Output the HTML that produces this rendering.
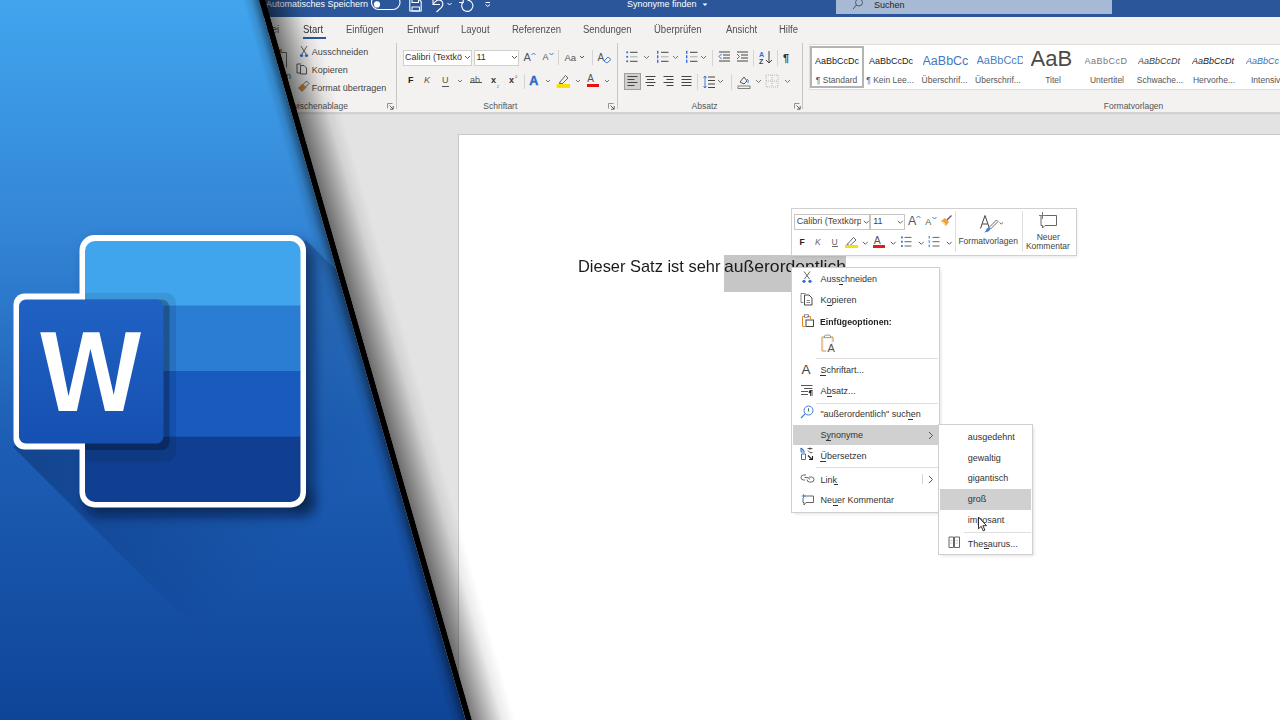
<!DOCTYPE html><html><head><meta charset="utf-8"><style>
html,body{margin:0;padding:0;width:1280px;height:720px;overflow:hidden;background:#e3e3e3}
body{position:relative;font-family:"Liberation Sans",sans-serif}
.t{position:absolute;line-height:1;white-space:nowrap;font-family:"Liberation Sans",sans-serif}
.r{position:absolute}
.s{position:absolute;overflow:visible}
</style></head><body>
<div class="r" style="left:0px;top:0px;width:1280px;height:17px;background:#2b579a;"></div>
<div class="t" style="left:266.00px;top:0.18px;font-size:9px;color:#ffffff;font-weight:400;">Automatisches Speichern</div>
<svg class="s" style="left:370px;top:-6px;" width="32" height="17" viewBox="0 0 32 17"><rect x="1.5" y="1.5" width="28.5" height="14" rx="7" fill="none" stroke="#fff" stroke-width="1.1"/><circle cx="7" cy="10.4" r="3.1" fill="#fff"/></svg>
<svg class="s" style="left:408px;top:-2px;" width="16" height="15" viewBox="0 0 16 15"><path d="M1.8 1 V13 H13.2 V3.5 L10.7 1 Z" fill="none" stroke="#fff" stroke-width="1.1"/><rect x="4" y="9" width="7.5" height="4" fill="none" stroke="#fff" stroke-width="1"/><rect x="4" y="1" width="6.5" height="3.5" fill="none" stroke="#fff" stroke-width="1"/></svg>
<svg class="s" style="left:430px;top:-2px;" width="24" height="16" viewBox="0 0 24 16"><path d="M3 2 V6.5 H10" fill="none" stroke="#fff" stroke-width="1.1"/><path d="M3.5 6 Q7 0.5 11 2.5 Q14.5 5 11.5 9.5 L6.5 14" fill="none" stroke="#fff" stroke-width="1.1"/><path d="M17.5 5 L19.5 7 L21.5 5" fill="none" stroke="#fff" stroke-width="1"/></svg>
<svg class="s" style="left:458px;top:-2px;" width="16" height="16" viewBox="0 0 16 16"><path d="M5 4.2 A5.6 5.6 0 1 0 9.5 2.2" fill="none" stroke="#fff" stroke-width="1.1"/><path d="M5.2 0 V4.5 H1" fill="none" stroke="#fff" stroke-width="1.1"/></svg>
<svg class="s" style="left:484px;top:0px;" width="8" height="10" viewBox="0 0 8 10"><path d="M1.5 2.5 H6 M1.5 4.5 L3.75 6.5 L6 4.5" fill="none" stroke="#fff" stroke-width="1"/></svg>
<div class="t" style="left:627.00px;top:-0.02px;font-size:9px;color:#ffffff;font-weight:400;">Synonyme finden</div>
<svg class="s" style="left:701px;top:2px;" width="8" height="6" viewBox="0 0 8 6"><path d="M1.5 1.5 L4 4 L6.5 1.5 Z" fill="#fff"/></svg>
<div class="r" style="left:836px;top:0px;width:276px;height:14px;background:#a6b9d5;"></div>
<svg class="s" style="left:851px;top:-2px;" width="14" height="14" viewBox="0 0 14 14"><circle cx="8" cy="4.5" r="3.5" fill="none" stroke="#444" stroke-width="0.8"/><path d="M5.5 7 L2 11" stroke="#444" stroke-width="0.9"/></svg>
<div class="t" style="left:874.00px;top:0.68px;font-size:9px;color:#262626;font-weight:400;">Suchen</div>
<div class="r" style="left:0px;top:17px;width:1280px;height:95px;background:#f3f2f1;"></div>
<div class="t" style="left:257.00px;top:24.74px;font-size:10px;color:#505050;font-weight:400;transform:scaleX(0.95);transform-origin:0 0;">Datei</div>
<div class="t" style="left:303.00px;top:24.74px;font-size:10px;color:#323130;font-weight:400;transform:scaleX(0.95);transform-origin:0 0;">Start</div>
<div class="t" style="left:346.00px;top:24.74px;font-size:10px;color:#505050;font-weight:400;transform:scaleX(0.95);transform-origin:0 0;">Einfügen</div>
<div class="t" style="left:406.60px;top:24.74px;font-size:10px;color:#505050;font-weight:400;transform:scaleX(0.95);transform-origin:0 0;">Entwurf</div>
<div class="t" style="left:461.00px;top:24.74px;font-size:10px;color:#505050;font-weight:400;transform:scaleX(0.95);transform-origin:0 0;">Layout</div>
<div class="t" style="left:512.00px;top:24.74px;font-size:10px;color:#505050;font-weight:400;transform:scaleX(0.95);transform-origin:0 0;">Referenzen</div>
<div class="t" style="left:583.00px;top:24.74px;font-size:10px;color:#505050;font-weight:400;transform:scaleX(0.95);transform-origin:0 0;">Sendungen</div>
<div class="t" style="left:654.00px;top:24.74px;font-size:10px;color:#505050;font-weight:400;transform:scaleX(0.95);transform-origin:0 0;">Überprüfen</div>
<div class="t" style="left:726.30px;top:24.74px;font-size:10px;color:#505050;font-weight:400;transform:scaleX(0.95);transform-origin:0 0;">Ansicht</div>
<div class="t" style="left:779.00px;top:24.74px;font-size:10px;color:#505050;font-weight:400;transform:scaleX(0.95);transform-origin:0 0;">Hilfe</div>
<div class="r" style="left:303px;top:36.5px;width:22.5px;height:2px;background:#2b579a;"></div>
<div class="r" style="left:396px;top:43px;width:1px;height:66px;background:#c8c6c4;"></div>
<div class="r" style="left:617px;top:43px;width:1px;height:66px;background:#c8c6c4;"></div>
<div class="r" style="left:802px;top:43px;width:1px;height:66px;background:#c8c6c4;"></div>
<div class="t" style="left:311.70px;top:47.68px;font-size:9px;color:#444;font-weight:400;">Ausschneiden</div>
<div class="t" style="left:311.70px;top:65.98px;font-size:9px;color:#444;font-weight:400;">Kopieren</div>
<div class="t" style="left:311.70px;top:83.68px;font-size:9px;color:#444;font-weight:400;">Format übertragen</div>
<div class="t" style="left:286.50px;top:101.50px;font-size:8.5px;color:#505050;font-weight:400;">Zwischenablage</div>
<svg class="s" style="left:298px;top:46px;" width="12" height="12" viewBox="0 0 12 12"><path d="M3 0 L8 8 M9 0 L4 8" stroke="#555" stroke-width="0.9" fill="none"/><circle cx="3.5" cy="9.5" r="1.6" fill="#2f6fd0"/><circle cx="8.5" cy="9.5" r="1.6" fill="#2f6fd0"/></svg>
<svg class="s" style="left:296px;top:63px;" width="14" height="12" viewBox="0 0 14 12"><path d="M5 1 H1 V10 H4" fill="none" stroke="#444" stroke-width="0.9"/><path d="M4.5 2.5 H8 L10.5 5 V11 H4.5 Z" fill="none" stroke="#444" stroke-width="0.9"/></svg>
<svg class="s" style="left:297px;top:80px;" width="14" height="13" viewBox="0 0 14 13"><path d="M1.5 8 L5.5 4 L9 7.5 L5 11.5 Z" fill="#d08a40" stroke="#b06a20" stroke-width="0.6"/><path d="M6 4.5 L9.5 1 L12 3.5 L8.5 7" fill="none" stroke="#666" stroke-width="1"/></svg>
<svg class="s" style="left:266px;top:46px;" width="24" height="26" viewBox="0 0 24 26"><path d="M8.5 6.5 H3.5 V21.5 H8 M14.5 6.5 H20.5 V21.5" fill="none" stroke="#666" stroke-width="1"/><rect x="13" y="3" width="3" height="4" fill="#d08030"/></svg>
<div class="t" style="left:255.50px;top:71.88px;font-size:9px;color:#444;font-weight:400;">Einfügen</div>
<svg class="s" style="left:387px;top:103px;" width="8" height="8" viewBox="0 0 8 8"><path d="M0.5 5.5 V0.5 H5.5" fill="none" stroke="#888" stroke-width="0.9"/><path d="M2.5 2.5 L6 6 M3 6.2 H6.2 V3" fill="none" stroke="#555" stroke-width="0.9"/></svg>
<svg class="s" style="left:608px;top:103px;" width="8" height="8" viewBox="0 0 8 8"><path d="M0.5 5.5 V0.5 H5.5" fill="none" stroke="#888" stroke-width="0.9"/><path d="M2.5 2.5 L6 6 M3 6.2 H6.2 V3" fill="none" stroke="#555" stroke-width="0.9"/></svg>
<svg class="s" style="left:794px;top:103px;" width="8" height="8" viewBox="0 0 8 8"><path d="M0.5 5.5 V0.5 H5.5" fill="none" stroke="#888" stroke-width="0.9"/><path d="M2.5 2.5 L6 6 M3 6.2 H6.2 V3" fill="none" stroke="#555" stroke-width="0.9"/></svg>
<div class="r" style="left:402.5px;top:49.5px;width:69px;height:16px;background:#ffffff;box-shadow:inset 0 0 0 1px #d2d0ce"></div>
<div class="t" style="left:405.00px;top:53.38px;font-size:9px;color:#333;font-weight:400;">Calibri (Textkö</div>
<svg class="s" style="left:464px;top:55px;" width="8" height="6" viewBox="0 0 8 6"><path d="M1 1 L3.5 3.5 L6 1" fill="none" stroke="#444" stroke-width="0.9"/></svg>
<div class="r" style="left:474px;top:49.5px;width:45px;height:16px;background:#ffffff;box-shadow:inset 0 0 0 1px #d2d0ce"></div>
<div class="t" style="left:476.50px;top:53.38px;font-size:9px;color:#333;font-weight:400;">11</div>
<svg class="s" style="left:511px;top:55px;" width="8" height="6" viewBox="0 0 8 6"><path d="M1 1 L3.5 3.5 L6 1" fill="none" stroke="#444" stroke-width="0.9"/></svg>
<div class="t" style="left:523.50px;top:51.69px;font-size:11px;color:#555;font-weight:400;">A</div>
<svg class="s" style="left:531px;top:51.5px;" width="6" height="4" viewBox="0 0 6 4"><path d="M0.5 3 L2.5 1 L4.5 3" fill="none" stroke="#2f6fd0" stroke-width="0.9"/></svg>
<div class="t" style="left:542.50px;top:53.38px;font-size:9px;color:#555;font-weight:400;">A</div>
<svg class="s" style="left:548.5px;top:51.5px;" width="6" height="4" viewBox="0 0 6 4"><path d="M0.5 1 L2.5 3 L4.5 1" fill="none" stroke="#2f6fd0" stroke-width="0.9"/></svg>
<div class="r" style="left:558px;top:50px;width:1px;height:15px;background:#d6d4d2;"></div>
<div class="t" style="left:564.50px;top:52.96px;font-size:9.5px;color:#555;font-weight:400;">Aa</div>
<svg class="s" style="left:579px;top:55px;" width="7" height="5" viewBox="0 0 7 5"><path d="M1 1 L3 3 L5 1" fill="none" stroke="#444" stroke-width="0.9"/></svg>
<div class="r" style="left:592px;top:50px;width:1px;height:15px;background:#d6d4d2;"></div>
<div class="t" style="left:597.50px;top:52.53px;font-size:10px;color:#555;font-weight:400;">A</div>
<svg class="s" style="left:602px;top:55px;" width="10" height="9" viewBox="0 0 10 9"><path d="M2 6 L6 2 L9 4.5 L5 8 Z" fill="none" stroke="#2f6fd0" stroke-width="0.9"/></svg>
<div class="t" style="left:408.00px;top:76.38px;font-size:9px;color:#222;font-weight:700;">F</div>
<div class="t" style="left:424.00px;top:76.38px;font-size:9px;color:#555;font-weight:400;font-style:italic">K</div>
<div class="t" style="left:442.00px;top:76.38px;font-size:9px;color:#555;font-weight:400;">U</div>
<div class="r" style="left:442px;top:85.5px;width:7px;height:1px;background:#555;"></div>
<svg class="s" style="left:457px;top:79px;" width="7" height="5" viewBox="0 0 7 5"><path d="M1 1 L3 3 L5 1" fill="none" stroke="#666" stroke-width="0.9"/></svg>
<div class="t" style="left:470.00px;top:76.38px;font-size:9px;color:#555;font-weight:400;">ab</div>
<div class="r" style="left:469.5px;top:81.5px;width:12px;height:1px;background:#555;"></div>
<div class="t" style="left:491.00px;top:76.38px;font-size:9px;color:#333;font-weight:700;">x</div>
<div class="t" style="left:496.50px;top:81.50px;font-size:6.5px;color:#2f6fd0;font-weight:400;">₂</div>
<div class="t" style="left:509.00px;top:76.38px;font-size:9px;color:#333;font-weight:700;">x</div>
<div class="t" style="left:515.00px;top:74.00px;font-size:6.5px;color:#2f6fd0;font-weight:400;">²</div>
<div class="r" style="left:524px;top:74px;width:1px;height:15px;background:#d6d4d2;"></div>
<div class="t" style="left:529.20px;top:75.42px;font-size:12.5px;color:#2b6cd4;font-weight:700;-webkit-text-stroke:0.4px #1f5fc0;">A</div>
<svg class="s" style="left:545px;top:79px;" width="7" height="5" viewBox="0 0 7 5"><path d="M1 1 L3 3 L5 1" fill="none" stroke="#666" stroke-width="0.9"/></svg>
<svg class="s" style="left:556px;top:73px;" width="16" height="16" viewBox="0 0 16 16"><path d="M3.5 9.5 L9.5 2.5 L12 5 L6 11 Z" fill="none" stroke="#555" stroke-width="0.9"/><path d="M3.5 9.5 L6 11 L3 11.5 Z" fill="#555"/><rect x="0.7" y="11" width="13.3" height="3.9" fill="#f5e000"/></svg>
<svg class="s" style="left:575px;top:79px;" width="7" height="5" viewBox="0 0 7 5"><path d="M1 1 L3 3 L5 1" fill="none" stroke="#666" stroke-width="0.9"/></svg>
<div class="t" style="left:587.30px;top:74.33px;font-size:10px;color:#555;font-weight:400;">A</div>
<div class="r" style="left:587px;top:84.2px;width:12px;height:2.7px;background:#e81010;"></div>
<svg class="s" style="left:604px;top:79px;" width="7" height="5" viewBox="0 0 7 5"><path d="M1 1 L3 3 L5 1" fill="none" stroke="#666" stroke-width="0.9"/></svg>
<div class="t" style="left:483.30px;top:101.50px;font-size:8.5px;color:#555;font-weight:400;">Schriftart</div>
<svg class="s" style="left:624px;top:50px;" width="14" height="16" viewBox="0 0 14 16"><rect x="2.3" y="1.4" width="1.8" height="1.8" fill="#2f6fd0"/><path d="M6 2.3 H13.5" stroke="#444" stroke-width="1"/><rect x="2.3" y="5.8999999999999995" width="1.8" height="1.8" fill="#2f6fd0"/><path d="M6 6.8 H13.5" stroke="#aaa" stroke-width="1"/><rect x="2.3" y="10.4" width="1.8" height="1.8" fill="#2f6fd0"/><path d="M6 11.3 H13.5" stroke="#444" stroke-width="1"/></svg>
<svg class="s" style="left:643px;top:55px;" width="8" height="6" viewBox="0 0 8 6"><path d="M1 1 L3.5 3.5 L6 1" fill="none" stroke="#666" stroke-width="0.9"/></svg>
<svg class="s" style="left:655px;top:50px;" width="14" height="16" viewBox="0 0 14 16"><rect x="2" y="0.7999999999999998" width="1.4" height="3" fill="#2f6fd0"/><path d="M6 2.3 H13.5" stroke="#444" stroke-width="1"/><rect x="2" y="5.3" width="1.4" height="3" fill="#2f6fd0"/><path d="M6 6.8 H13.5" stroke="#aaa" stroke-width="1"/><rect x="2" y="9.8" width="1.4" height="3" fill="#2f6fd0"/><path d="M6 11.3 H13.5" stroke="#444" stroke-width="1"/></svg>
<svg class="s" style="left:672px;top:55px;" width="8" height="6" viewBox="0 0 8 6"><path d="M1 1 L3.5 3.5 L6 1" fill="none" stroke="#666" stroke-width="0.9"/></svg>
<svg class="s" style="left:684px;top:50px;" width="14" height="16" viewBox="0 0 14 16"><rect x="2" y="0.7999999999999998" width="1.4" height="3" fill="#2f6fd0"/><path d="M6 2.3 H13.5" stroke="#444" stroke-width="1"/><rect x="2" y="5.3" width="1.4" height="3" fill="#2f6fd0"/><path d="M6 6.8 H13.5" stroke="#aaa" stroke-width="1"/><rect x="2" y="9.8" width="1.4" height="3" fill="#2f6fd0"/><path d="M6 11.3 H13.5" stroke="#444" stroke-width="1"/></svg>
<svg class="s" style="left:700px;top:55px;" width="8" height="6" viewBox="0 0 8 6"><path d="M1 1 L3.5 3.5 L6 1" fill="none" stroke="#666" stroke-width="0.9"/></svg>
<div class="r" style="left:712px;top:50px;width:1px;height:16px;background:#d6d4d2;"></div>
<svg class="s" style="left:718px;top:51px;" width="14" height="12" viewBox="0 0 14 12"><path d="M1 1 H12 M5 4 H12 M5 7 H12 M1 10 H12" stroke="#444" stroke-width="1"/><path d="M3.5 3 L1 5.5 L3.5 8" fill="none" stroke="#2f6fd0" stroke-width="1"/></svg>
<svg class="s" style="left:736px;top:51px;" width="14" height="12" viewBox="0 0 14 12"><path d="M1 1 H12 M5 4 H12 M5 7 H12 M1 10 H12" stroke="#444" stroke-width="1"/><path d="M1 3 L3.5 5.5 L1 8" fill="none" stroke="#2f6fd0" stroke-width="1"/></svg>
<div class="r" style="left:753px;top:50px;width:1px;height:16px;background:#d6d4d2;"></div>
<div class="t" style="left:759.00px;top:51.07px;font-size:7px;color:#2f6fd0;font-weight:700;">A</div>
<div class="t" style="left:759.00px;top:58.07px;font-size:7px;color:#444;font-weight:700;">Z</div>
<svg class="s" style="left:765px;top:50px;" width="8" height="16" viewBox="0 0 8 16"><path d="M4 1 V13 M1 10 L4 13 L7 10" fill="none" stroke="#444" stroke-width="1"/></svg>
<div class="r" style="left:777px;top:50px;width:1px;height:16px;background:#d6d4d2;"></div>
<div class="t" style="left:783.00px;top:52.69px;font-size:11px;color:#333;font-weight:700;">¶</div>
<div class="r" style="left:624px;top:73px;width:17px;height:17px;background:#d2d0ce;box-shadow:inset 0 0 0 1px #a19f9d"></div>
<svg class="s" style="left:627px;top:75px;" width="12" height="14" viewBox="0 0 12 14"><path d="M0.5 1.5 H10.5" stroke="#444" stroke-width="1"/><path d="M0.5 4.5 H7.5" stroke="#444" stroke-width="1"/><path d="M0.5 7.5 H10.5" stroke="#444" stroke-width="1"/><path d="M0.5 10.5 H7.5" stroke="#444" stroke-width="1"/></svg>
<svg class="s" style="left:645px;top:75px;" width="12" height="14" viewBox="0 0 12 14"><path d="M0.5 1.5 H10.5" stroke="#444" stroke-width="1"/><path d="M2.0 4.5 H9.0" stroke="#444" stroke-width="1"/><path d="M0.5 7.5 H10.5" stroke="#444" stroke-width="1"/><path d="M2.0 10.5 H9.0" stroke="#444" stroke-width="1"/></svg>
<svg class="s" style="left:663px;top:75px;" width="12" height="14" viewBox="0 0 12 14"><path d="M0.5 1.5 H10.5" stroke="#444" stroke-width="1"/><path d="M3.5 4.5 H10.5" stroke="#444" stroke-width="1"/><path d="M0.5 7.5 H10.5" stroke="#444" stroke-width="1"/><path d="M3.5 10.5 H10.5" stroke="#444" stroke-width="1"/></svg>
<svg class="s" style="left:681px;top:75px;" width="12" height="14" viewBox="0 0 12 14"><path d="M0.5 1.5 H10.5" stroke="#444" stroke-width="1"/><path d="M0.5 4.5 H10.5" stroke="#444" stroke-width="1"/><path d="M0.5 7.5 H10.5" stroke="#444" stroke-width="1"/><path d="M0.5 10.5 H10.5" stroke="#444" stroke-width="1"/></svg>
<div class="r" style="left:697px;top:74px;width:1px;height:16px;background:#d6d4d2;"></div>
<svg class="s" style="left:703px;top:75px;" width="14" height="14" viewBox="0 0 14 14"><path d="M5 2 H12 M5 5.5 H12 M5 9 H12 M5 12.5 H12" stroke="#444" stroke-width="1"/><path d="M2 1 V13 M0.5 3 L2 1 L3.5 3 M0.5 11 L2 13 L3.5 11" fill="none" stroke="#2f6fd0" stroke-width="0.9"/></svg>
<svg class="s" style="left:717px;top:79px;" width="8" height="6" viewBox="0 0 8 6"><path d="M1 1 L3.5 3.5 L6 1" fill="none" stroke="#666" stroke-width="0.9"/></svg>
<div class="r" style="left:731px;top:74px;width:1px;height:16px;background:#d6d4d2;"></div>
<svg class="s" style="left:737px;top:74px;" width="14" height="16" viewBox="0 0 14 16"><path d="M3 8 L7 3 L10 7 L7 10 Z" fill="none" stroke="#444" stroke-width="0.9"/><path d="M10 5 Q12 6 11 9" fill="none" stroke="#2f6fd0" stroke-width="0.9"/><rect x="1" y="12" width="12" height="2.5" fill="none" stroke="#666" stroke-width="0.8"/></svg>
<svg class="s" style="left:755px;top:79px;" width="8" height="6" viewBox="0 0 8 6"><path d="M1 1 L3.5 3.5 L6 1" fill="none" stroke="#666" stroke-width="0.9"/></svg>
<svg class="s" style="left:765px;top:74px;" width="14" height="14" viewBox="0 0 14 14"><rect x="1" y="1" width="12" height="12" fill="none" stroke="#aaa" stroke-width="0.8" stroke-dasharray="1 1"/><path d="M7 1 V13 M1 7 H13" stroke="#aaa" stroke-width="0.8" stroke-dasharray="1 1"/></svg>
<svg class="s" style="left:784px;top:79px;" width="8" height="6" viewBox="0 0 8 6"><path d="M1 1 L3.5 3.5 L6 1" fill="none" stroke="#666" stroke-width="0.9"/></svg>
<div class="t" style="left:691.60px;top:101.50px;font-size:8.5px;color:#555;font-weight:400;">Absatz</div>
<div class="r" style="left:810px;top:44.5px;width:470px;height:44px;background:#ffffff;box-shadow:0 0 0 1px #dedede"></div>
<div class="r" style="left:810px;top:46px;width:54px;height:42px;background:#ffffff;box-shadow:inset 0 0 0 2px #b4b4b4"></div>
<div class="t" style="left:815px;top:56.98px;font-size:9px;color:#222;width:46px;overflow:hidden">AaBbCcDc</div>
<div class="t" style="left:809.5px;top:75.60px;width:54px;text-align:center;font-size:8.5px;color:#555">¶ Standard</div>
<div class="t" style="left:869px;top:56.98px;font-size:9px;color:#222;width:46px;overflow:hidden">AaBbCcDc</div>
<div class="t" style="left:863px;top:75.60px;width:54px;text-align:center;font-size:8.5px;color:#555">¶ Kein Lee...</div>
<div class="t" style="left:922.5px;top:55.32px;font-size:12.5px;color:#3f78c0;width:46px;overflow:hidden">AaBbCc</div>
<div class="t" style="left:917.5px;top:75.60px;width:54px;text-align:center;font-size:8.5px;color:#555">Überschrif...</div>
<div class="t" style="left:976.5px;top:55.49px;font-size:11px;color:#4a7fc0;width:46px;overflow:hidden">AaBbCcD</div>
<div class="t" style="left:971px;top:75.60px;width:54px;text-align:center;font-size:8.5px;color:#555">Überschrif...</div>
<div class="t" style="left:1030.5px;top:47.58px;font-size:22px;color:#4a4a4a;width:46px;overflow:hidden">AaB</div>
<div class="t" style="left:1026px;top:75.60px;width:54px;text-align:center;font-size:8.5px;color:#555">Titel</div>
<div class="t" style="left:1084.5px;top:56.98px;font-size:9px;color:#777;letter-spacing:0.5px;width:46px;overflow:hidden">AaBbCcD</div>
<div class="t" style="left:1080px;top:75.60px;width:54px;text-align:center;font-size:8.5px;color:#555">Untertitel</div>
<div class="t" style="left:1138px;top:56.98px;font-size:9px;color:#444;font-style:italic;width:46px;overflow:hidden">AaBbCcDt</div>
<div class="t" style="left:1133px;top:75.60px;width:54px;text-align:center;font-size:8.5px;color:#555">Schwache...</div>
<div class="t" style="left:1192px;top:56.98px;font-size:9px;color:#222;font-style:italic;width:46px;overflow:hidden">AaBbCcDt</div>
<div class="t" style="left:1187px;top:75.60px;width:54px;text-align:center;font-size:8.5px;color:#555">Hervorhe...</div>
<div class="t" style="left:1246px;top:56.98px;font-size:9px;color:#2f6fb8;font-style:italic;width:46px;overflow:hidden">AaBbCc</div>
<div class="t" style="left:1241px;top:75.60px;width:54px;text-align:center;font-size:8.5px;color:#555">Intensive</div>
<div class="t" style="left:1103.80px;top:101.50px;font-size:8.5px;color:#555;font-weight:400;">Formatvorlagen</div>
<div class="r" style="left:0px;top:112px;width:1280px;height:2px;background:#d2d2d2;"></div>
<div class="r" style="left:0px;top:114px;width:1280px;height:1px;background:#dcdcdc;"></div>
<div class="r" style="left:459px;top:135px;width:821px;height:585px;background:#ffffff;box-shadow:0 0 0 1px #c9c9c9"></div>
<div class="r" style="left:724px;top:254.5px;width:122px;height:37px;background:#c6c6c6;"></div>
<div class="t" style="left:577.60px;top:257.61px;font-size:17px;color:#1a1a1a;font-weight:400;transform:scaleX(0.966);transform-origin:0 0;">Dieser Satz ist sehr</div>
<div class="t" style="left:723.90px;top:257.61px;font-size:17px;color:#1a1a1a;font-weight:400;transform:scaleX(1.033);transform-origin:0 0;">außerordentlich</div>
<div class="r" style="left:792px;top:209.3px;width:284px;height:45.7px;background:#ffffff;box-shadow:0 0 0 1px #d0d0d0, 1px 2px 3px rgba(0,0,0,0.10)"></div>
<div class="r" style="left:794.4px;top:213.5px;width:75.6px;height:16.8px;background:#fff;box-shadow:inset 0 0 0 1px #c8c6c4"></div>
<div class="r" style="left:869.5px;top:213.5px;width:35px;height:16.8px;background:#fff;box-shadow:inset 0 0 0 1px #c8c6c4"></div>
<div class="t" style="left:796.8px;top:216.7px;font-size:9px;color:#444;width:64px;overflow:hidden">Calibri (Textkörper)</div>
<svg class="s" style="left:862.5px;top:220px;" width="7" height="5" viewBox="0 0 7 5"><path d="M0.8 0.8 L3.3 3.3 L5.8 0.8" fill="none" stroke="#555" stroke-width="0.9"/></svg>
<div class="t" style="left:873.20px;top:216.68px;font-size:9px;color:#444;font-weight:400;">11</div>
<svg class="s" style="left:897px;top:220px;" width="7" height="5" viewBox="0 0 7 5"><path d="M0.8 0.8 L3.3 3.3 L5.8 0.8" fill="none" stroke="#555" stroke-width="0.9"/></svg>
<div class="t" style="left:907.90px;top:214.72px;font-size:12.5px;color:#555;font-weight:400;">A</div>
<svg class="s" style="left:916px;top:215px;" width="6" height="4" viewBox="0 0 6 4"><path d="M0.5 3 L2.5 1 L4.5 3" fill="none" stroke="#2f6fd0" stroke-width="0.9"/></svg>
<div class="t" style="left:925.30px;top:217.68px;font-size:9px;color:#555;font-weight:400;">A</div>
<svg class="s" style="left:932px;top:216px;" width="6" height="4" viewBox="0 0 6 4"><path d="M0.5 1 L2.5 3 L4.5 1" fill="none" stroke="#2f6fd0" stroke-width="0.9"/></svg>
<svg class="s" style="left:940px;top:215px;" width="13" height="12" viewBox="0 0 13 12"><path d="M1 6 L5 3 L9 7 L6 11 Z" fill="#f0a040"/><path d="M2.5 6.5 L5.5 9.5" stroke="#fff" stroke-width="0.8"/><path d="M7 5 L11.5 0.5" stroke="#555" stroke-width="1.3"/></svg>
<div class="t" style="left:799.60px;top:237.50px;font-size:8.5px;color:#222;font-weight:700;">F</div>
<div class="t" style="left:814.90px;top:237.50px;font-size:8.5px;color:#666;font-weight:400;font-style:italic">K</div>
<div class="t" style="left:831.50px;top:237.50px;font-size:8.5px;color:#666;font-weight:400;">U</div>
<div class="r" style="left:831.5px;top:246.2px;width:6.3px;height:0.9px;background:#666;"></div>
<svg class="s" style="left:845px;top:235px;" width="14" height="13" viewBox="0 0 14 13"><path d="M2.5 9 L8.5 2.5 L11 5 L4.5 11 Z M2.5 9 L1.5 10.5" fill="none" stroke="#555" stroke-width="0.9"/></svg>
<div class="r" style="left:845.4px;top:244.5px;width:12.5px;height:3.3px;background:#f5e10a;"></div>
<svg class="s" style="left:862.3px;top:241px;" width="7" height="5" viewBox="0 0 7 5"><path d="M0.8 0.8 L3.3 3.3 L5.8 0.8" fill="none" stroke="#555" stroke-width="0.9"/></svg>
<div class="t" style="left:873.80px;top:234.61px;font-size:10.5px;color:#555;font-weight:400;">A</div>
<div class="r" style="left:873.2px;top:244.5px;width:11.8px;height:3.3px;background:#e51a1a;"></div>
<svg class="s" style="left:890.2px;top:241px;" width="7" height="5" viewBox="0 0 7 5"><path d="M0.8 0.8 L3.3 3.3 L5.8 0.8" fill="none" stroke="#555" stroke-width="0.9"/></svg>
<svg class="s" style="left:900px;top:236px;" width="14" height="12" viewBox="0 0 14 12"><rect x="1" y="0.5" width="1.8" height="1.8" fill="#2f6fd0"/><rect x="1" y="4.8" width="1.8" height="1.8" fill="#2f6fd0"/><rect x="1" y="9.1" width="1.8" height="1.8" fill="#2f6fd0"/><path d="M4.5 1.4 H11.5 M4.5 5.7 H11.5 M4.5 10 H11.5" stroke="#555" stroke-width="0.9"/></svg>
<svg class="s" style="left:918px;top:241px;" width="7" height="5" viewBox="0 0 7 5"><path d="M0.8 0.8 L3.3 3.3 L5.8 0.8" fill="none" stroke="#555" stroke-width="0.9"/></svg>
<svg class="s" style="left:928px;top:236px;" width="14" height="12" viewBox="0 0 14 12"><path d="M1.2 0 V2.5 M1.2 4.3 V6.8 M1.2 8.6 V11.1" stroke="#2f6fd0" stroke-width="1"/><path d="M4.5 1.4 H11.5 M4.5 5.7 H11.5 M4.5 10 H11.5" stroke="#555" stroke-width="0.9"/></svg>
<svg class="s" style="left:945.5px;top:241px;" width="7" height="5" viewBox="0 0 7 5"><path d="M0.8 0.8 L3.3 3.3 L5.8 0.8" fill="none" stroke="#555" stroke-width="0.9"/></svg>
<div class="r" style="left:954.5px;top:211px;width:1px;height:41px;background:#e1dfdd;"></div>
<svg class="s" style="left:978px;top:213px;" width="28" height="22" viewBox="0 0 28 22"><path d="M2.5 15.5 L7 2.5 L11.5 15.5 M4.2 11 H9.8" fill="none" stroke="#444" stroke-width="1"/><path d="M18.5 7 L20 8.5 L12.5 16 L11 14.5 Z" fill="#fff" stroke="#444" stroke-width="0.8"/><path d="M11 14.5 L12.5 16 Q11.5 19 6 19.5 Q8.5 17.5 8.5 16 Q9 14.5 11 14.5 Z" fill="#3b82d8"/><path d="M21.5 9.5 L23.3 11 L25 9.5" fill="none" stroke="#555" stroke-width="0.9"/></svg>
<div class="t" style="left:958.40px;top:236.70px;font-size:8.5px;color:#444;font-weight:400;">Formatvorlagen</div>
<div class="r" style="left:1022.4px;top:211px;width:1px;height:41px;background:#e1dfdd;"></div>
<svg class="s" style="left:1037px;top:212px;" width="21" height="18" viewBox="0 0 21 18"><path d="M4 3.5 H19.5 V13.5 H8 L5.5 16 V13.5 H4 Z" fill="none" stroke="#555" stroke-width="0.9"/><path d="M5.5 0 V7 M2 3.5 H9" stroke="#777" stroke-width="1"/></svg>
<div class="t" style="left:1036.70px;top:232.50px;font-size:8.5px;color:#444;font-weight:400;">Neuer</div>
<div class="t" style="left:1025.90px;top:242.30px;font-size:8.5px;color:#444;font-weight:400;">Kommentar</div>
<div class="r" style="left:792px;top:268px;width:147.4px;height:243.5px;background:#ffffff;box-shadow:0 0 0 1px #cfcfcf, 2px 2px 3px rgba(0,0,0,0.12)"></div>
<div class="r" style="left:792.6px;top:425.1px;width:146px;height:19.9px;background:#d0d0d0;"></div>
<div class="t" style="left:820.40px;top:275.08px;font-size:9px;color:#333;font-weight:400;">Ausschneiden</div>
<div class="r" style="left:838.5px;top:283.9px;width:4.5px;height:0.9px;background:#333;"></div>
<div class="t" style="left:820.40px;top:295.68px;font-size:9px;color:#333;font-weight:400;">Kopieren</div>
<div class="r" style="left:826.5px;top:304.5px;width:5px;height:0.9px;background:#333;"></div>
<div class="t" style="left:820.40px;top:317.88px;font-size:9px;color:#222;font-weight:700;transform:scaleX(0.97);transform-origin:0 0;">Einfügeoptionen:</div>
<div class="t" style="left:820.40px;top:366.28px;font-size:9px;color:#333;font-weight:400;">Schriftart...</div>
<div class="r" style="left:820.4px;top:375.1px;width:5.5px;height:0.9px;background:#333;"></div>
<div class="t" style="left:820.40px;top:387.48px;font-size:9px;color:#333;font-weight:400;">Absatz...</div>
<div class="r" style="left:826.5px;top:396.3px;width:5px;height:0.9px;background:#333;"></div>
<div class="t" style="left:820.40px;top:410.08px;font-size:9px;color:#333;font-weight:400;">"außerordentlich" suchen</div>
<div class="r" style="left:908px;top:418.9px;width:5px;height:0.9px;background:#333;"></div>
<div class="t" style="left:820.40px;top:431.18px;font-size:9px;color:#333;font-weight:400;">Synonyme</div>
<div class="r" style="left:826.2px;top:440.0px;width:4.5px;height:0.9px;background:#333;"></div>
<div class="t" style="left:820.40px;top:452.03px;font-size:9px;color:#333;font-weight:400;">Übersetzen</div>
<div class="r" style="left:820.4px;top:460.85px;width:6px;height:0.9px;background:#333;"></div>
<div class="t" style="left:820.40px;top:475.53px;font-size:9px;color:#333;font-weight:400;">Link</div>
<div class="r" style="left:833.5px;top:484.35px;width:4.5px;height:0.9px;background:#333;"></div>
<div class="t" style="left:820.40px;top:495.78px;font-size:9px;color:#333;font-weight:400;">Neuer Kommentar</div>
<div class="r" style="left:833px;top:504.6px;width:5px;height:0.9px;background:#333;"></div>
<div class="r" style="left:816.25px;top:358px;width:121.64999999999998px;height:1px;background:#e1dfdd;"></div>
<div class="r" style="left:816.25px;top:402.5px;width:121.64999999999998px;height:1px;background:#e1dfdd;"></div>
<div class="r" style="left:816.25px;top:466.9px;width:121.64999999999998px;height:1px;background:#e1dfdd;"></div>
<svg class="s" style="left:928px;top:430.5px;" width="6" height="9" viewBox="0 0 6 9"><path d="M1 1 L4.5 4.5 L1 8" fill="none" stroke="#444" stroke-width="0.9"/></svg>
<svg class="s" style="left:928px;top:474.5px;" width="6" height="9" viewBox="0 0 6 9"><path d="M1 1 L4.5 4.5 L1 8" fill="none" stroke="#444" stroke-width="0.9"/></svg>
<div class="r" style="left:921.5px;top:474.4px;width:1px;height:9.4px;background:#d6d6d6;"></div>
<svg class="s" style="left:801px;top:271px;" width="12" height="13" viewBox="0 0 12 13"><path d="M3 0.5 L8.5 8 M9 0.5 L3.5 8" stroke="#555" stroke-width="0.9" fill="none"/><circle cx="3" cy="10.3" r="1.6" fill="#2f6fd0"/><circle cx="9" cy="10.3" r="1.6" fill="#2f6fd0"/></svg>
<svg class="s" style="left:800px;top:292px;" width="14" height="14" viewBox="0 0 14 14"><path d="M5.5 1.5 H1 V10.5 H3.5" fill="none" stroke="#777" stroke-width="0.9"/><path d="M4.5 3 H9 L12 6 V13 H4.5 Z" fill="none" stroke="#333" stroke-width="0.9"/><path d="M6.5 8.5 H10 M6.5 10.5 H10" stroke="#555" stroke-width="0.7"/></svg>
<svg class="s" style="left:801px;top:314px;" width="14" height="14" viewBox="0 0 14 14"><path d="M6 2.5 H9.5 V5 M4 2.5 H1.5 V12.5 H4" fill="none" stroke="#e08a2c" stroke-width="1"/><rect x="3.5" y="0.7" width="4" height="2.5" fill="none" stroke="#777" stroke-width="0.8"/><rect x="5" y="6" width="7.5" height="6.5" fill="#fff" stroke="#333" stroke-width="0.9"/></svg>
<svg class="s" style="left:820px;top:334px;" width="18" height="20" viewBox="0 0 18 20"><path d="M5 3 H2 V17 H6 M10 3 H13 V8" fill="none" stroke="#e08a2c" stroke-width="1"/><path d="M4.5 3.5 V2 Q4.5 1 7.5 1 Q10.5 1 10.5 2 V3.5 Z" fill="none" stroke="#777" stroke-width="0.8"/><path d="M3 4 H12 V17 H3 Z" fill="none" stroke="#c8c8c8" stroke-width="0.5"/></svg>
<div class="t" style="left:827.50px;top:342.69px;font-size:11px;color:#555;font-weight:400;">A</div>
<div class="t" style="left:801.50px;top:363.07px;font-size:13.5px;color:#444;font-weight:400;">A</div>
<svg class="s" style="left:800px;top:384px;" width="14" height="13" viewBox="0 0 14 13"><path d="M1 1.5 H12.5 M4 4.5 H12.5 M1 7.5 H8 M1 10.5 H8" stroke="#444" stroke-width="0.9"/><path d="M10.5 6.5 V12 M12 6.5 V12 M9.5 6.5 H12.5" stroke="#222" stroke-width="0.8"/><circle cx="10" cy="8" r="1.3" fill="#222"/></svg>
<svg class="s" style="left:800px;top:405px;" width="14" height="14" viewBox="0 0 14 14"><circle cx="8.5" cy="5.5" r="4.5" fill="none" stroke="#3b7fd6" stroke-width="1"/><path d="M5.3 8.7 L1 13" stroke="#3b7fd6" stroke-width="1.2"/><path d="M8.5 3.2 V6.5" stroke="#555" stroke-width="0.9"/></svg>
<svg class="s" style="left:800px;top:447px;" width="14" height="14" viewBox="0 0 14 14"><path d="M1 1 V5 H5" fill="none" stroke="#2f6fd0" stroke-width="1"/><path d="M1 1 L4 4" stroke="#2f6fd0" stroke-width="1.2"/><path d="M1.5 7 H5.5 V12.5 H1.5 Z" fill="none" stroke="#2f6fd0" stroke-width="1"/><path d="M7.5 1.5 H12.5 M10 0.5 V3 M8 3.5 Q10 7 12.5 5.5" fill="none" stroke="#333" stroke-width="0.8"/><path d="M8 8.5 L12 12.5 M9 12.5 H12.5 V9" fill="none" stroke="#222" stroke-width="1.1"/></svg>
<svg class="s" style="left:800px;top:473px;" width="15" height="11" viewBox="0 0 15 11"><path d="M6 2 H3.5 Q1 2 1 4.5 Q1 7 3.5 7 H5" fill="none" stroke="#555" stroke-width="0.9"/><path d="M9 4 H11.5 Q14 4 14 6.5 Q14 9 11.5 9 H9.5 Q7 9 7 6.5" fill="none" stroke="#555" stroke-width="0.9"/><path d="M4.5 4.5 H7 Q9.5 4.5 9.5 6.5" fill="none" stroke="#555" stroke-width="0.9"/></svg>
<svg class="s" style="left:801px;top:494px;" width="14" height="13" viewBox="0 0 14 13"><path d="M3 2 H12.5 V8.5 H5 L3 11 V8.5 H2 V4" fill="none" stroke="#555" stroke-width="0.9"/><path d="M2.5 0 V4 M0.5 2 H4.5" stroke="#3b82d8" stroke-width="0.9"/></svg>
<div class="r" style="left:939.3px;top:425.4px;width:93px;height:129.1px;background:#ffffff;box-shadow:0 0 0 1px #cfcfcf, 2px 2px 3px rgba(0,0,0,0.12)"></div>
<div class="r" style="left:940.2px;top:489.1px;width:90.7px;height:20.7px;background:#d0d0d0;"></div>
<div class="t" style="left:967.80px;top:432.58px;font-size:9px;color:#333;font-weight:400;">ausgedehnt</div>
<div class="t" style="left:967.80px;top:453.78px;font-size:9px;color:#333;font-weight:400;">gewaltig</div>
<div class="t" style="left:967.80px;top:474.28px;font-size:9px;color:#333;font-weight:400;">gigantisch</div>
<div class="t" style="left:967.80px;top:494.88px;font-size:9px;color:#333;font-weight:400;">groß</div>
<div class="t" style="left:967.80px;top:516.28px;font-size:9px;color:#333;font-weight:400;">imposant</div>
<div class="t" style="left:967.80px;top:539.58px;font-size:9px;color:#333;font-weight:400;">Thesaurus...</div>
<div class="r" style="left:983.5px;top:548.4px;width:5px;height:0.9px;background:#333;"></div>
<div class="r" style="left:963.9px;top:531.7px;width:66.7px;height:1px;background:#e1dfdd;"></div>
<svg class="s" style="left:948px;top:536px;" width="13" height="13" viewBox="0 0 13 13"><path d="M1 1 H5.5 V11.5 H1 Z M6.5 1 H11.5 V11.5 H6.5 Z" fill="none" stroke="#555" stroke-width="0.9"/><path d="M2 4.5 H4.5 M2 7 H4.5 M7.5 4.5 H10 M7.5 7 H10" stroke="#aaa" stroke-width="0.6"/></svg>
<svg class="s" style="left:977px;top:516px;" width="12" height="18" viewBox="0 0 12 18"><path d="M1.5 1 V12.8 L4.2 10.3 L6.2 14.8 L7.9 14.1 L5.9 9.7 L9.5 9.7 Z" fill="#fff" stroke="#1a1a1a" stroke-width="0.9" stroke-linejoin="round"/></svg>
<svg class="s" style="left:0;top:0" width="1280" height="720" viewBox="0 0 1280 720">
<defs>
<linearGradient id="bg" x1="0" y1="0" x2="0" y2="720" gradientUnits="userSpaceOnUse"><stop offset="0" stop-color="#41a5ee"/><stop offset="0.33" stop-color="#3384d4"/><stop offset="0.6" stop-color="#1d5fb5"/><stop offset="1" stop-color="#0f4599"/></linearGradient>
<linearGradient id="ish" x1="346.94" y1="364.42" x2="362.32" y2="360.00" gradientUnits="userSpaceOnUse"><stop offset="0" stop-color="#000" stop-opacity="0"/><stop offset="0.5" stop-color="#000" stop-opacity="0.12"/><stop offset="1" stop-color="#000" stop-opacity="0.45"/></linearGradient>
<linearGradient id="osh" x1="368.62" y1="360.00" x2="408.98" y2="348.41" gradientUnits="userSpaceOnUse"><stop offset="0" stop-color="#000" stop-opacity="0.52"/><stop offset="0.35" stop-color="#000" stop-opacity="0.30"/><stop offset="0.7" stop-color="#000" stop-opacity="0.08"/><stop offset="1" stop-color="#000" stop-opacity="0"/></linearGradient>
<linearGradient id="lsh" x1="160" y1="340" x2="330" y2="510" gradientUnits="userSpaceOnUse"><stop offset="0" stop-color="#001040" stop-opacity="0.30"/><stop offset="0.6" stop-color="#001040" stop-opacity="0.10"/><stop offset="1" stop-color="#001040" stop-opacity="0"/></linearGradient>
<linearGradient id="wsq" x1="0" y1="299" x2="0" y2="444" gradientUnits="userSpaceOnUse"><stop offset="0" stop-color="#1f62c4"/><stop offset="1" stop-color="#1650b0"/></linearGradient>
<filter id="blur6" x="-50%" y="-50%" width="200%" height="200%"><feGaussianBlur stdDeviation="6"/></filter>
<clipPath id="pan"><polygon points="0,0 259.00,0 465.64,720 0,720"/></clipPath>
</defs>
<polygon points="0,0 259.00,0 465.64,720 0,720" fill="url(#bg)"/>
<g clip-path="url(#pan)">
<polygon points="306,240 906,840 613,1047 13,447" fill="url(#lsh)"/>
<polygon points="0,0 259.00,0 465.64,720 0,720" fill="url(#ish)"/>
<rect x="84" y="240" width="228" height="274" rx="14" fill="#001030" opacity="0.35" filter="url(#blur6)"/>
<rect x="88" y="490" width="226" height="26" rx="10" fill="#000820" opacity="0.35" filter="url(#blur6)"/>
<rect x="296" y="250" width="18" height="260" rx="6" fill="#000820" opacity="0.25" filter="url(#blur6)"/>
</g>
<polygon points="259.00,0 265.30,0 471.94,720 465.64,720" fill="#000"/>
<polygon points="265.30,0 325.30,0 531.94,720 471.94,720" fill="url(#osh)"/>
<rect x="13.5" y="293.5" width="155.5" height="156" rx="11" fill="#fff"/>
<rect x="79.5" y="235" width="226.5" height="272.5" rx="15" fill="#fff"/>
<clipPath id="doc"><rect x="85" y="241" width="215.5" height="261" rx="10"/></clipPath>
<g clip-path="url(#doc)">
<rect x="85" y="241" width="216" height="65" fill="#41a5ee"/>
<rect x="85" y="305.5" width="216" height="66" fill="#2b7cd3"/>
<rect x="85" y="371" width="216" height="66" fill="#185abd"/>
<rect x="85" y="436.7" width="216" height="70" fill="#103f91"/>
<rect x="20" y="293" width="156" height="168.5" rx="10" fill="#000" opacity="0.09"/>
<rect x="20" y="299.5" width="149.5" height="150.5" rx="8" fill="#000" opacity="0.25"/>
</g>
<rect x="19" y="299.4" width="144.5" height="144.1" rx="7" fill="url(#wsq)"/>
<path d="M40.25 332.25 L55.6 332.25 L68.5 396.25 L83.1 332.25 L99.4 332.25 L113.75 395 L125.6 332.25 L141 332.25 L123.1 411 L105 411 L90.4 348.75 L76.9 411 L58.75 411 Z" fill="#fff"/>
</svg>
</body></html>
